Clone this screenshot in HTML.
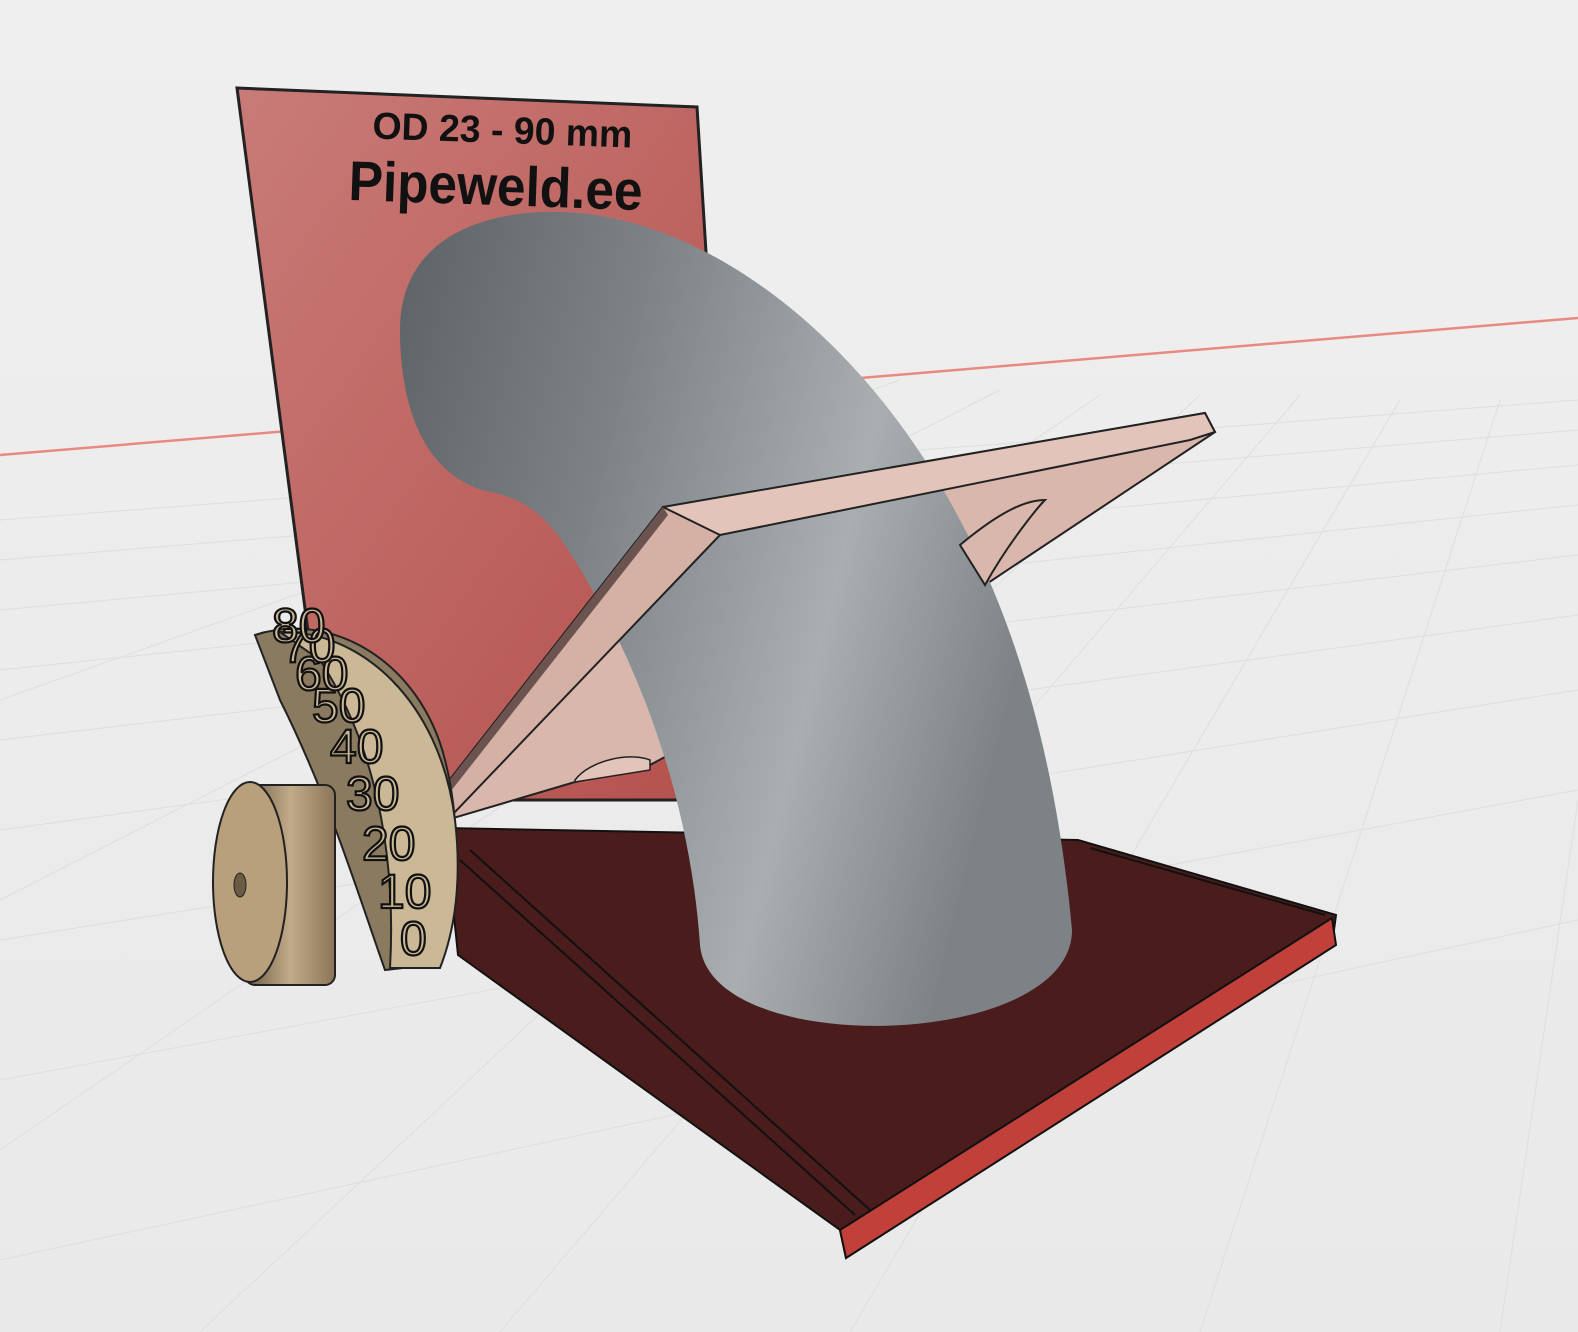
<!DOCTYPE html>
<html><head><meta charset="utf-8"><style>
html,body{margin:0;padding:0;background:#eeeeee;}
svg{display:block}
</style></head><body>
<svg width="1578" height="1332" viewBox="0 0 1578 1332" xmlns="http://www.w3.org/2000/svg" font-family="Liberation Sans, sans-serif">
<defs>
<linearGradient id="bg" x1="0" y1="0" x2="0" y2="1"><stop offset="0" stop-color="#efefef"/><stop offset="1" stop-color="#e9e9e9"/></linearGradient>
<linearGradient id="plate" x1="0" y1="0" x2="1" y2="1"><stop offset="0" stop-color="#c97b78"/><stop offset="1" stop-color="#b4504c"/></linearGradient>
<linearGradient id="pipe" x1="0" y1="0" x2="1" y2="0.3"><stop offset="0" stop-color="#5d6266"/><stop offset="0.35" stop-color="#7b8185"/><stop offset="0.72" stop-color="#a9aeb1"/><stop offset="1" stop-color="#7c8286"/></linearGradient>
<linearGradient id="knob" x1="0" y1="0" x2="1" y2="0"><stop offset="0" stop-color="#6b5b45"/><stop offset="0.5" stop-color="#c2ab88"/><stop offset="1" stop-color="#8a7558"/></linearGradient>
</defs>
<rect width="1578" height="1332" fill="url(#bg)"/>
<g stroke="#dedede" stroke-width="1" fill="none">
<path d="M0,520 L1578,400 M0,560 L1578,430 M0,610 L1578,465 M0,670 L1578,505 M0,740 L1578,555 M0,830 L1578,615 M0,940 L1578,690 M0,1080 L1578,790 M0,1260 L1578,920"/>
<path d="M0,700 L900,380 M0,900 L1000,390 M0,1150 L1100,395 M200,1332 L1200,395 M500,1332 L1300,395 M850,1332 L1400,400 M1200,1332 L1500,400 M1500,1332 L1578,800"/>
</g>
<path d="M0,455 L300,430" stroke="#e88a80" stroke-width="2.5"/>
<path d="M860,378 L1578,318" stroke="#e88a80" stroke-width="2.5"/>
<polygon points="237,88 697,107 740,800 330,800" fill="url(#plate)" stroke="#222" stroke-width="3"/>
<text x="372" y="143" font-size="38" font-weight="bold" fill="#111" textLength="260" lengthAdjust="spacingAndGlyphs" transform="rotate(2 502 143)">OD 23 - 90 mm</text>
<text x="348" y="205" font-size="56" font-weight="bold" fill="#111" textLength="294" lengthAdjust="spacingAndGlyphs" transform="rotate(2 495 205)">Pipeweld.ee</text>
<polygon points="445,828 1078,840 1336,915 1332,945 846,1258 840,1230 458,955" fill="#4a1c1c" stroke="#111" stroke-width="2"/>
<polygon points="840,1230 1332,918 1336,945 846,1258" fill="#c1403a" stroke="#111" stroke-width="2"/>
<path d="M460,860 L855,1215 M470,850 L870,1210 M1090,848 L1325,915" stroke="#111" stroke-width="2" fill="none"/>
<polygon points="663,507 1205,413 1215,432 985,585 650,765 575,782 440,822 430,805" fill="#d9b7ad" stroke="#222" stroke-width="2"/>
<path d="M400,330 C400,240 480,210 560,212 C700,215 860,330 960,520 C1030,650 1060,800 1072,930 C1072,1050 710,1060 700,945 C690,800 640,660 565,545 C535,500 505,495 482,490 C420,470 400,400 400,330 Z" fill="url(#pipe)"/>
<path d="M985,585 C1010,540 1040,505 1045,500 C1020,500 990,520 960,545 Z" fill="#d9b7ad" stroke="#222" stroke-width="2"/>
<polygon points="663,507 1205,413 1215,432 1190,440 720,535 675,530" fill="#e3c4ba" stroke="#222" stroke-width="2"/>
<polygon points="663,507 720,535 455,812 440,822 430,805" fill="#d5b0a5" stroke="#222" stroke-width="2"/>
<polygon points="663,507 430,805 436,810 668,515" fill="#6b5450"/>
<path d="M575,780 C590,760 630,752 650,760 L650,770 L575,782 Z" fill="#e3c4ba" stroke="#222" stroke-width="1.5"/>
<path d="M255,635 C330,610 420,660 445,760 C465,840 455,920 430,965 L385,970 C360,900 330,800 280,700 Z" fill="#8a7a60" stroke="#222" stroke-width="2"/>
<path d="M280,632 C360,630 440,700 455,820 C462,880 455,930 440,968 L390,968 C395,880 385,760 320,660 Z" fill="#cbb896" stroke="#222" stroke-width="2"/>
<g font-size="48" fill="#cbb896" stroke="#111" stroke-width="2.2">
<text x="400" y="955">0</text><text x="378" y="908">10</text><text x="362" y="860">20</text><text x="346" y="810">30</text><text x="330" y="763">40</text><text x="312" y="722">50</text><text x="295" y="690">60</text><text x="282" y="662">70</text><text x="272" y="642">80</text>
</g>
<rect x="245" y="785" width="90" height="200" rx="10" fill="url(#knob)" stroke="#222" stroke-width="2"/>
<ellipse cx="250" cy="882" rx="37" ry="100" fill="#b8a07c" stroke="#222" stroke-width="2"/>
<ellipse cx="240" cy="885" rx="6" ry="12" fill="#6b5b45" stroke="#222"/>
</svg>
</body></html>
